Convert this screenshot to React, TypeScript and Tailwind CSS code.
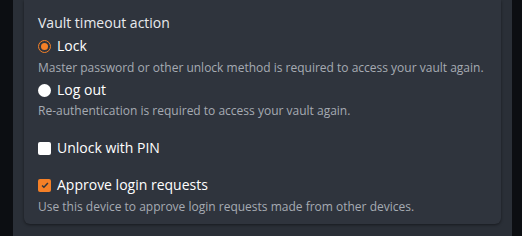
export default function App() {
  return (
    <div className="flex h-[236px] w-[522px] bg-[#0c0e12] font-['Open_Sans',sans-serif]">
      <div className="ml-[13px] mr-[10px] flex-1 bg-[#2a2f37] px-[11px]">
        <div className="rounded-b-md bg-[#2f343d] px-[14px] pt-[13px] pb-[8px] shadow-[0_1px_3px_rgba(0,0,0,0.45)]">
          <div className="text-[14px] font-medium leading-[20px] text-[#e8eaee]">
            Vault timeout action
          </div>
          <label className="mt-[3px] flex items-center gap-[6px] text-[14px] font-medium leading-[20px] text-white">
            <span className="flex h-[13px] w-[13px] items-center justify-center rounded-full border-[1.5px] border-[#f58027]">
              <span className="h-[7px] w-[7px] rounded-full bg-[#f58027]" />
            </span>
            Lock
          </label>
          <div className="mt-[3px] text-[12px] leading-[18px] text-[#a6abb3]">
            Master password or other unlock method is required to access your vault again.
          </div>
          <label className="mt-[3px] flex items-center gap-[6px] text-[14px] font-medium leading-[20px] text-white">
            <span className="h-[13px] w-[13px] rounded-full bg-white" />
            Log out
          </label>
          <div className="mt-[2px] text-[12px] leading-[18px] text-[#a6abb3]">
            Re-authentication is required to access your vault again.
          </div>
          <label className="mt-[18px] flex items-center gap-[6px] text-[14px] font-medium leading-[20px] text-white">
            <span className="h-[13px] w-[13px] rounded-[2px] bg-white" />
            Unlock with PIN
          </label>
          <label className="mt-[17px] flex items-center gap-[6px] text-[14px] font-medium leading-[20px] text-white">
            <span className="flex h-[13px] w-[13px] items-center justify-center rounded-[2px] bg-[#f58027]">
              <svg viewBox="0 0 12 12" className="h-[10px] w-[10px]">
                <path d="M2.5 6.5l2.2 2.2 4.8-5" fill="none" stroke="#2f343d" strokeWidth="1.8" />
              </svg>
            </span>
            Approve login requests
          </label>
          <div className="mt-[3px] text-[12px] leading-[18px] text-[#a6abb3]">
            Use this device to approve login requests made from other devices.
          </div>
        </div>
      </div>
    </div>
  );
}
